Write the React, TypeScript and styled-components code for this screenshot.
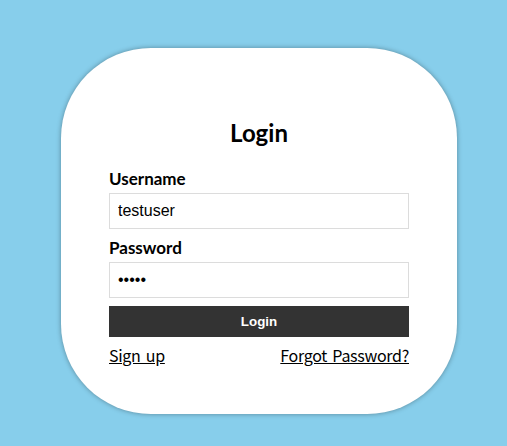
import React from "react";
import styled, { createGlobalStyle } from "styled-components";

const GlobalStyle = createGlobalStyle`
  html, body {
    margin: 0;
    padding: 0;
    background-color: #87ceeb;
  }
  body {
    font-family: Lato, "Noto Sans", sans-serif;
  }
`;

const Page = styled.div`
  min-height: 446px;
  padding: 48px 0 0 61px;
  box-sizing: border-box;
`;

const Card = styled.form`
  width: 396px;
  height: 366px;
  box-sizing: border-box;
  padding: 70px 48px 0;
  background-color: #fff;
  border-radius: 90px;
  box-shadow: 0 0 5px rgba(0, 0, 0, 0.35);
  display: flex;
  flex-direction: column;
`;

const Title = styled.h2`
  margin: 0 0 21px;
  font-size: 24px;
  line-height: 30px;
  font-weight: 700;
  text-align: center;
  color: #000;
`;

const Label = styled.label`
  display: block;
  font-size: 17px;
  line-height: 20px;
  font-weight: 700;
  color: #000;
  margin-bottom: 4px;
`;

const Field = styled.div<{ last?: boolean }>`
  display: flex;
  flex-direction: column;
  margin-bottom: ${(props) => (props.last ? "8px" : "9px")};
`;

const Input = styled.input`
  width: 100%;
  height: 36px;
  box-sizing: border-box;
  padding: 0 8px;
  border: 1px solid #dcdcdc;
  font-family: Arial, "Liberation Sans", sans-serif;
  font-size: 16px;
  color: #000;
  outline: none;
`;

const SubmitButton = styled.button`
  width: 100%;
  height: 31px;
  border: none;
  background-color: #333;
  color: #fff;
  font-family: Arial, "Liberation Sans", sans-serif;
  font-size: 13.33px;
  font-weight: 700;
  cursor: pointer;
`;

const Links = styled.div`
  display: flex;
  justify-content: space-between;
  margin-top: 7px;
`;

const LinkText = styled.a`
  font-family: "Noto Sans CJK KR", "Noto Sans", sans-serif;
  font-size: 16px;
  line-height: 22px;
  letter-spacing: -0.3px;
  word-spacing: 2px;
  color: #000;
  text-decoration: underline;
  cursor: pointer;
`;

export default function App() {
  return (
    <>
      <GlobalStyle />
      <Page>
        <Card onSubmit={(e) => e.preventDefault()}>
          <Title>Login</Title>
          <Field>
            <Label htmlFor="username">Username</Label>
            <Input id="username" type="text" defaultValue="testuser" />
          </Field>
          <Field last>
            <Label htmlFor="password">Password</Label>
            <Input id="password" type="password" defaultValue="12345" />
          </Field>
          <SubmitButton type="submit">Login</SubmitButton>
          <Links>
            <LinkText>Sign up</LinkText>
            <LinkText>Forgot Password?</LinkText>
          </Links>
        </Card>
      </Page>
    </>
  );
}
